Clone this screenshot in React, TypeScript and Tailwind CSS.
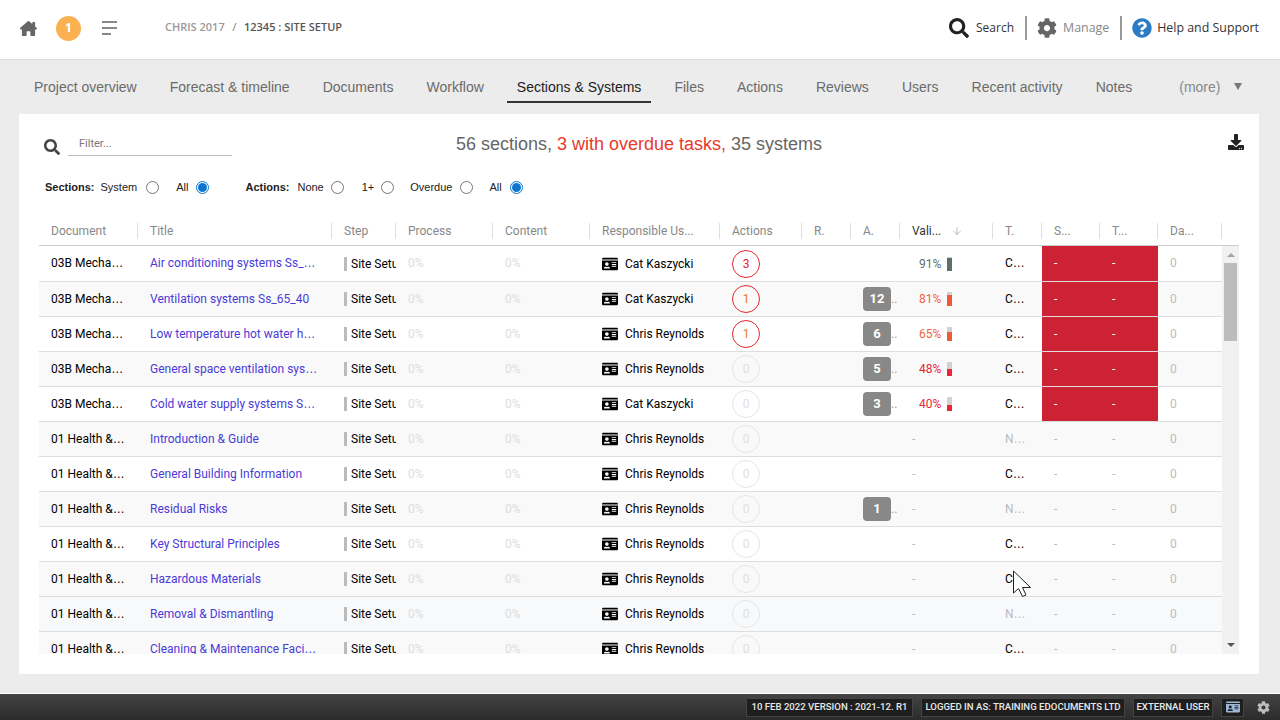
import { ArrowDown } from "lucide-react";
import { FaCog, FaDownload, FaIdCard, FaQuestionCircle, FaSearch } from "react-icons/fa";
import { FaHouseChimney } from "react-icons/fa6";

const GRID =
  "grid grid-cols-[99px_194px_64px_97px_97px_130px_82px_49px_49px_93px_49px_58px_58px_64px]";

const tabs = [
  "Project overview",
  "Forecast & timeline",
  "Documents",
  "Workflow",
  "Sections & Systems",
  "Files",
  "Actions",
  "Reviews",
  "Users",
  "Recent activity",
  "Notes",
];

const columns = [
  "Document",
  "Title",
  "Step",
  "Process",
  "Content",
  "Responsible Us...",
  "Actions",
  "R.",
  "A.",
  "Vali...",
  "T.",
  "S...",
  "T...",
  "Da...",
];

interface Row {
  doc: string;
  title: string;
  user: string;
  actions: number;
  badge?: number;
  valid?: number;
  type: string;
  overdue?: boolean;
  bg?: string;
}

const rows: Row[] = [
  { doc: "03B Mecha…", title: "Air conditioning systems Ss_…", user: "Cat Kaszycki", actions: 3, valid: 91, type: "C…", overdue: true },
  { doc: "03B Mecha…", title: "Ventilation systems Ss_65_40", user: "Cat Kaszycki", actions: 1, badge: 12, valid: 81, type: "C…", overdue: true },
  { doc: "03B Mecha…", title: "Low temperature hot water h…", user: "Chris Reynolds", actions: 1, badge: 6, valid: 65, type: "C…", overdue: true },
  { doc: "03B Mecha…", title: "General space ventilation sys…", user: "Chris Reynolds", actions: 0, badge: 5, valid: 48, type: "C…", overdue: true },
  { doc: "03B Mecha…", title: "Cold water supply systems S…", user: "Cat Kaszycki", actions: 0, badge: 3, valid: 40, type: "C…", overdue: true },
  { doc: "01 Health &…", title: "Introduction & Guide", user: "Chris Reynolds", actions: 0, type: "N…" },
  { doc: "01 Health &…", title: "General Building Information", user: "Chris Reynolds", actions: 0, type: "C…" },
  { doc: "01 Health &…", title: "Residual Risks", user: "Chris Reynolds", actions: 0, badge: 1, type: "N…" },
  { doc: "01 Health &…", title: "Key Structural Principles", user: "Chris Reynolds", actions: 0, type: "C…" },
  { doc: "01 Health &…", title: "Hazardous Materials", user: "Chris Reynolds", actions: 0, type: "C…" },
  { doc: "01 Health &…", title: "Removal & Dismantling", user: "Chris Reynolds", actions: 0, type: "N…", bg: "bg-[#f8f9fb]" },
  { doc: "01 Health &…", title: "Cleaning & Maintenance Faci…", user: "Chris Reynolds", actions: 0, type: "C…" },
];

// the ellipsis in the screenshot is the wider Arial one
function Clipped({ text }: { text: string }) {
  if (!text.endsWith("…")) return <>{text}</>;
  return (
    <>
      {text.slice(0, -1)}
      <span className="font-['Liberation_Sans',sans-serif]">…</span>
    </>
  );
}

function Radio({ checked = false }: { checked?: boolean }) {
  return (
    <span className="flex h-[13px] w-[13px] items-center justify-center rounded-full border border-[#767676] bg-white data-[on=true]:border-[#0b76d1]" data-on={checked}>
      {checked && <span className="h-[9px] w-[9px] rounded-full bg-[#0b76d1]" />}
    </span>
  );
}

function ValidBar({ value }: { value: number }) {
  const fill = value > 90 ? "bg-[#5d7067]" : value > 50 ? "bg-[#ee5a38]" : "bg-[#ea2536]";
  return (
    <span className="ml-[6px] flex h-[14px] w-[5px] flex-col justify-end bg-[#d2d2d2]">
      <span className={fill} style={{ height: `${value}%` }} />
    </span>
  );
}

function TableRow({ row, index }: { row: Row; index: number }) {
  const bg = row.bg ?? (index % 2 === 1 ? "bg-[#f9f9f9]" : "bg-white");
  // first row sits one pixel taller under the header rule
  const height = index === 0 ? "h-[36px]" : "h-[35px]";
  const validColor =
    row.valid === undefined
      ? ""
      : row.valid > 90
        ? "text-[#5d7067]"
        : row.valid > 50
          ? "text-[#ee6340]"
          : "text-[#ea2536]";
  return (
    <div className={`${GRID} ${height} items-stretch border-b border-[#dddddd] text-[12px] leading-[34px] text-black ${bg}`}>
      <div className="pl-[12px] whitespace-nowrap">
        <Clipped text={row.doc} />
      </div>
      <div className="pl-[12px] whitespace-nowrap text-[#4a3bd8]">
        <Clipped text={row.title} />
      </div>
      <div className="flex items-center overflow-hidden pl-[12px] whitespace-nowrap">
        <span className="mr-[4px] h-[14px] w-[3px] shrink-0 bg-[#bbbbbb]" />
        Site Setup
      </div>
      <div className="pl-[12px] text-[#dddddd]">0%</div>
      <div className="pl-[12px] text-[#dddddd]">0%</div>
      <div className="flex items-center pl-[12px]">
        <FaIdCard className="mr-[7px] text-[16px] text-black" />
        {row.user}
      </div>
      <div className="flex items-center pl-[12px]">
        <span
          className={`flex h-[28px] w-[28px] items-center justify-center rounded-full border ${
            row.actions > 0 ? "border-[#e8262d]" : "border-[#e6e6e6] text-[#e0e0e0]"
          } ${row.actions > 1 ? "text-[#e8262d]" : row.actions === 1 ? "text-[#ee7a22]" : ""}`}
        >
          {row.actions}
        </span>
      </div>
      <div />
      <div className="flex items-center pl-[12px]">
        {row.badge !== undefined && (
          <>
            <span className="flex h-[24px] w-[28px] shrink-0 items-center justify-center rounded-[4px] bg-[#888888] text-[13px] font-bold text-white">
              {row.badge}
            </span>
            <span className="text-[#999999]">..</span>
          </>
        )}
      </div>
      <div className="flex items-center pl-[12px]">
        {row.valid !== undefined ? (
          <span className={`ml-[7px] flex items-center ${validColor}`}>
            {row.valid}%
            <ValidBar value={row.valid} />
          </span>
        ) : (
          <span className="text-[#bbbbbb]">-</span>
        )}
      </div>
      <div className={`pl-[12px] ${row.type.startsWith("N") ? "text-[#bbbbbb]" : ""}`}>
        <Clipped text={row.type} />
      </div>
      <div className={`pl-[12px] ${row.overdue ? "bg-[#cc2233] text-white" : "text-[#bbbbbb]"}`}>-</div>
      <div className={`pl-[12px] ${row.overdue ? "bg-[#cc2233] text-white" : "text-[#bbbbbb]"}`}>-</div>
      <div className="pl-[12px] text-[#bbbbbb]">0</div>
    </div>
  );
}

export default function App() {
  return (
    <div className="relative flex h-[720px] flex-col overflow-hidden bg-[#ececec] font-['Roboto',sans-serif]">
      {/* Top bar */}
      <header className="flex h-[60px] shrink-0 items-center border-b border-[#dddddd] bg-white pr-[21px] pb-[3px] pl-[20px] font-['Open_Sans',sans-serif]">
        <FaHouseChimney className="text-[17px] text-[#666666]" />
        <span className="ml-[19px] flex h-[25px] w-[25px] items-center justify-center rounded-full bg-[#fbb14f] text-[12px] font-bold text-white">
          1
        </span>
        <div className="ml-[21px] flex w-[15px] flex-col gap-[4px]">
          <span className="h-[2px] w-[15px] bg-[#888888]" />
          <span className="h-[2px] w-[15px] bg-[#888888]" />
          <span className="h-[2px] w-[9px] bg-[#888888]" />
        </div>
        <div className="ml-[48px] flex -translate-y-[1px] items-center text-[11px] font-semibold">
          <span className="text-[#999999]">CHRIS 2017</span>
          <span className="mx-[7.5px] text-[#999999]">/</span>
          <span className="text-[#555555]">12345 : SITE SETUP</span>
        </div>
        <div className="ml-auto flex items-center text-[12.4px]">
          <FaSearch className="text-[20px] text-[#222222]" />
          <span className="ml-[7px] text-[12px] text-[#333333]">Search</span>
          <span className="mr-[10px] ml-[11px] h-[24px] w-[2px] bg-[#999999]" />
          <FaCog className="text-[20px] text-[#666666]" />
          <span className="ml-[6px] text-[#888888]">Manage</span>
          <span className="mr-[10px] ml-[11px] h-[24px] w-[2px] bg-[#999999]" />
          <FaQuestionCircle className="text-[20px] text-[#2a7cc7]" />
          <span className="ml-[5px] text-[#333333]">Help and Support</span>
        </div>
      </header>

      {/* Tabs */}
      <nav className="flex h-[54px] shrink-0 items-start gap-[13.05px] pt-[16px] pl-[24px] font-['Liberation_Sans',sans-serif] text-[14px] text-[#6b6b6b]">
        {tabs.map((tab) => (
          <span
            key={tab}
            className={`h-[27px] px-[10px] leading-[22px] whitespace-nowrap ${
              tab === "Sections & Systems" ? "border-b-2 border-[#333333] text-[#222222]" : ""
            }`}
          >
            {tab}
          </span>
        ))}
        <span className="ml-[24px] leading-[22px] text-[#888888]">(more)</span>
        <span className="mt-[7px] h-0 w-0 border-x-[4px] border-t-[7px] border-x-transparent border-t-[#777777]" />
      </nav>

      {/* Card */}
      <main className="mx-[19px] flex h-[560px] w-[1240px] shrink-0 flex-col bg-white px-[20px]">
        <div className="relative flex h-[60px] shrink-0 items-center">
          <FaSearch className="mt-[6px] ml-[5px] text-[16px] text-[#444444]" />
          <div className="mt-[1px] ml-[8px] flex h-[23px] w-[164px] items-center border-b border-[#bbbbbb] pt-[1px] pl-[11px] text-[11px] text-[#777777]">
            Filter...
          </div>
          <div className="flex-1 pr-[193px] text-center font-['Liberation_Sans',sans-serif] text-[18px] text-[#666666]">
            56 sections, <span className="text-[#e8392b]">3 with overdue tasks,</span> 35 systems
          </div>
          <FaDownload className="absolute top-[20px] right-[-5px] text-[16px] text-[#222222]" />
        </div>

        <div className="flex h-[26px] shrink-0 items-center pl-[6px] font-['Liberation_Sans',sans-serif] text-[11px] text-[#222222]">
          <b className="mr-[6px]">Sections:</b>
          <span className="mr-[9px]">System</span>
          <Radio />
          <span className="mr-[8px] ml-[17px]">All</span>
          <Radio checked />
          <b className="mr-[8px] ml-[36px]">Actions:</b>
          <span className="mr-[7px]">None</span>
          <Radio />
          <span className="mr-[7px] ml-[18px]">1+</span>
          <Radio />
          <span className="mr-[8px] ml-[16px]">Overdue</span>
          <Radio />
          <span className="mr-[8px] ml-[16px]">All</span>
          <Radio checked />
        </div>

        {/* Table head */}
        <div className={`${GRID} mt-[17px] h-[29px] shrink-0 items-center border-b border-[#cccccc] text-[12px] text-[#888888]`}>
          {columns.map((col) => (
            <div key={col} className="flex h-[16px] items-center border-r border-[#e0e0e0] pl-[12px] leading-[16px] whitespace-nowrap">
              {col === "Vali..." ? (
                <>
                  <span className="text-[#333333]">{col}</span>
                  <ArrowDown className="ml-[10px] h-[12px] w-[12px] text-[#999999]" strokeWidth={1.25} />
                </>
              ) : (
                col
              )}
            </div>
          ))}
        </div>

        {/* Table body + scrollbar */}
        <div className="flex h-[408px] shrink-0 overflow-hidden">
          <div className="w-[1183px] shrink-0">
            {rows.map((row, i) => (
              <TableRow key={row.title} row={row} index={i} />
            ))}
          </div>
          <div className="flex w-[17px] shrink-0 flex-col items-center bg-[#f1f1f1]">
            <span className="mt-[7px] h-0 w-0 border-x-[4px] border-b-[4px] border-x-transparent border-b-[#a3a3a3]" />
            <span className="mt-[6px] h-[78px] w-[13px] bg-[#bcbcbc]" />
            <span className="mt-auto mb-[7px] h-0 w-0 border-x-[4px] border-t-[4px] border-x-transparent border-t-[#555555]" />
          </div>
        </div>
      </main>

      {/* Footer */}
      <footer className="mt-auto flex h-[27px] shrink-0 items-center justify-end border-t border-white bg-gradient-to-b from-[#444444] to-[#2b2b2b] pr-[10px] text-[9.6px] font-medium text-[#e8e8e8]">
        <span className="flex h-[19px] w-[167px] items-center justify-center border border-[#444444] bg-[#1e1e1e] whitespace-nowrap">
          10 FEB 2022 VERSION : 2021-12. R1
        </span>
        <span className="ml-[8px] flex h-[19px] w-[204px] items-center justify-center border border-[#444444] bg-[#1e1e1e] whitespace-nowrap">
          LOGGED IN AS: TRAINING EDOCUMENTS LTD
        </span>
        <span className="ml-[8px] flex h-[19px] w-[80px] items-center justify-center border border-[#444444] bg-[#1e1e1e] whitespace-nowrap">
          EXTERNAL USER
        </span>
        <span className="ml-[8px] flex h-[19px] w-[23px] items-center justify-center border border-[#444444] bg-[#1e1e1e]">
          <FaIdCard className="text-[14px] text-[#9db8d8]" />
        </span>
        <FaCog className="ml-[13px] text-[13px] text-[#bdbdbd]" />
      </footer>

      {/* Mouse cursor */}
      <svg className="absolute top-[570px] left-[1012px]" width="20" height="28" viewBox="0 0 20 28">
        <path d="M1.5 1 L1.5 23 L6.5 18.5 L10.5 26.5 L14 25 L10.5 17.5 L18.5 17.5 Z" fill="white" stroke="#222222" strokeWidth="1" />
      </svg>
    </div>
  );
}
